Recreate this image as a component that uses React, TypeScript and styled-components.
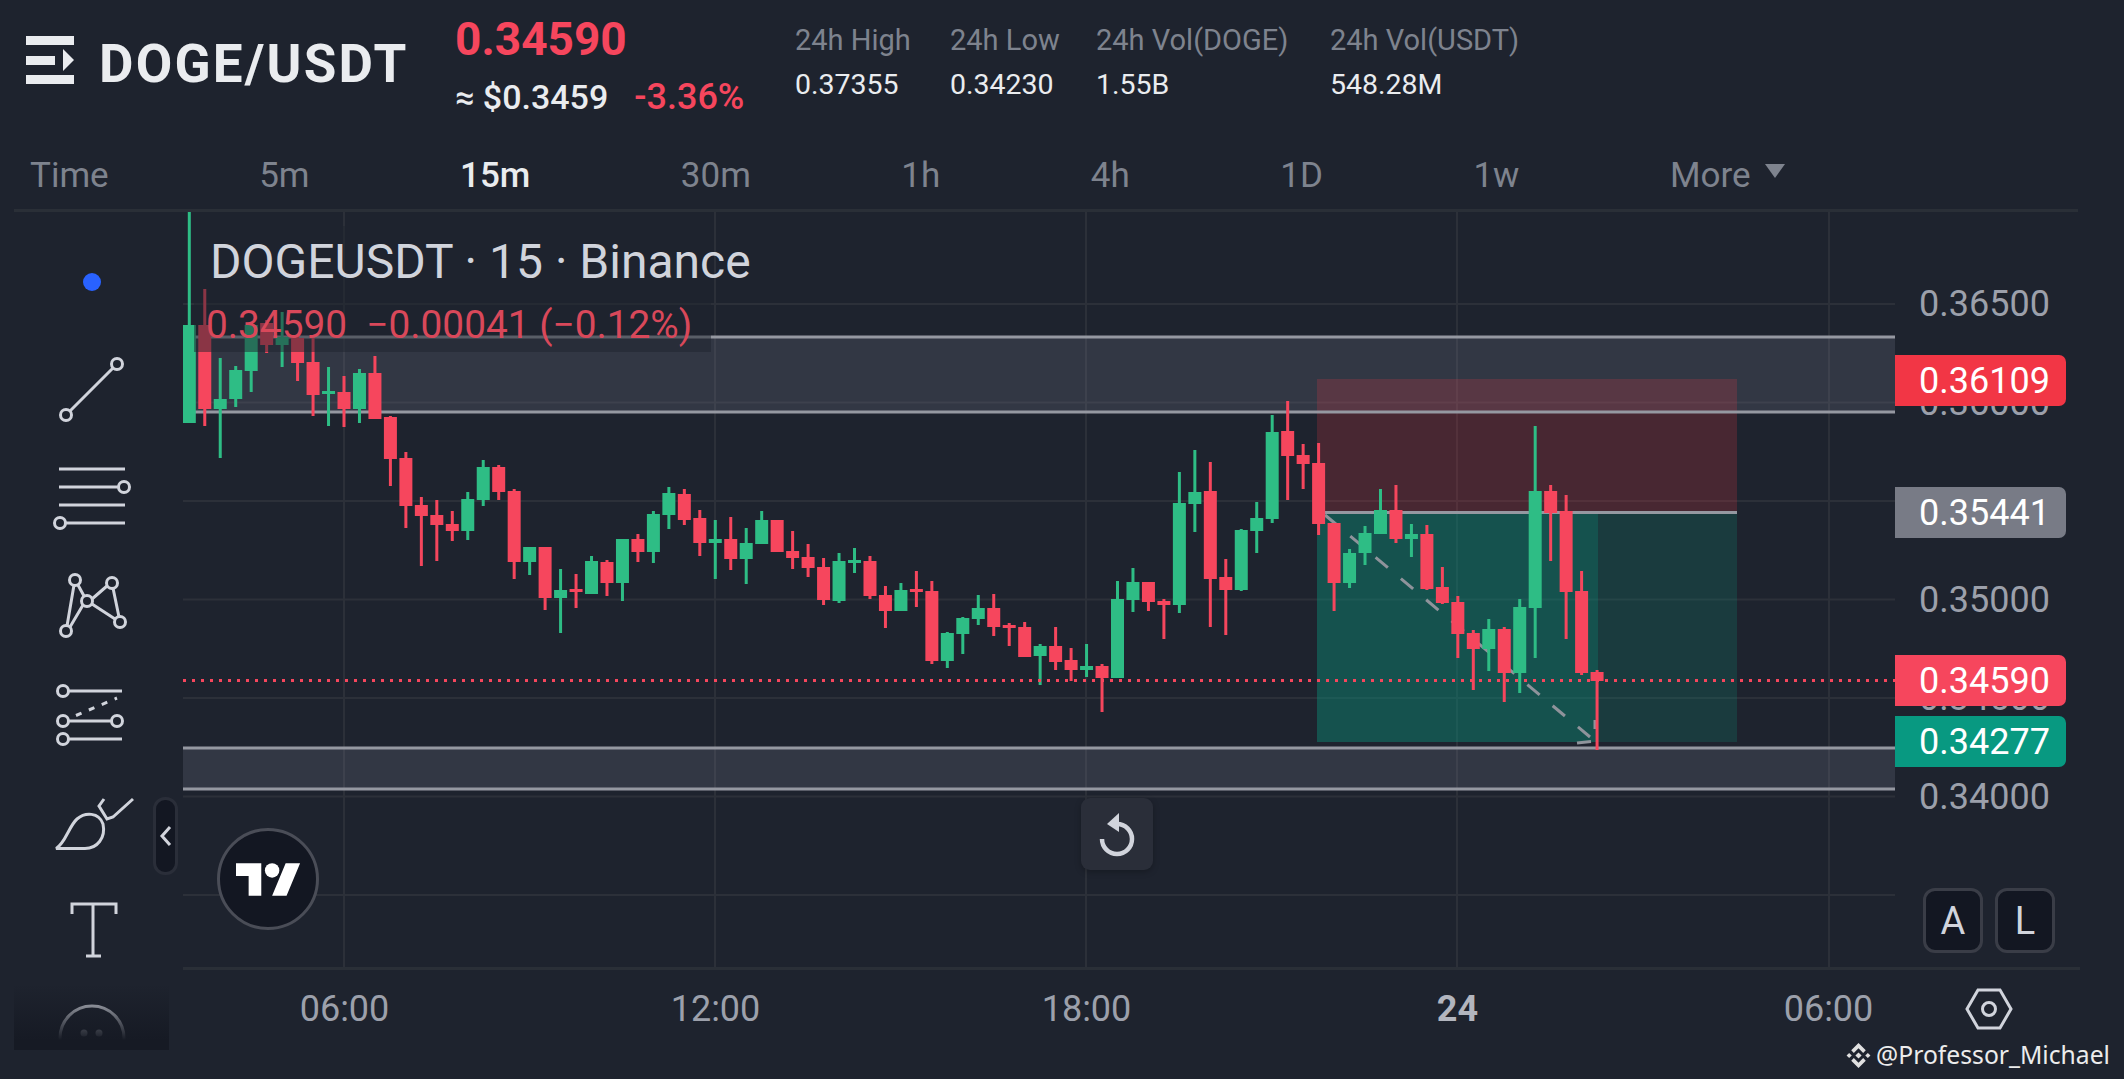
import React from "react";
import styled, { createGlobalStyle } from "styled-components";

const GlobalStyle = createGlobalStyle`
  html, body {
    margin: 0;
    padding: 0;
    background: #1e232e;
  }
  * {
    box-sizing: border-box;
  }
`;

const UP = "#2ebd85";
const DOWN = "#f6465d";
const ICON = "#d1d4dc";

// [g]reen / [r]ed, body top, body bottom, wick top, wick bottom (page y)
const CANDLES: [string, number, number, number, number][] = [
  ["g", 325, 423, 211, 423], ["r", 325, 409, 289, 426], ["g", 399, 409, 358, 458], ["g", 370, 399, 366, 407],
  ["g", 325, 371, 322, 392], ["r", 323, 345, 320, 353], ["g", 337, 345, 312, 367], ["r", 338, 363, 335, 381],
  ["r", 362, 395, 338, 416], ["g", 391, 394, 367, 426], ["r", 392, 409, 376, 427], ["g", 373, 409, 369, 423],
  ["r", 373, 419, 356, 419], ["r", 417, 459, 416, 486], ["r", 458, 506, 452, 528], ["r", 505, 516, 497, 566],
  ["r", 515, 525, 500, 561], ["r", 524, 531, 511, 541], ["g", 499, 531, 492, 540], ["g", 467, 500, 460, 506],
  ["r", 467, 492, 465, 500], ["r", 491, 562, 489, 579], ["g", 547, 562, 547, 575], ["r", 547, 598, 547, 610],
  ["g", 590, 598, 569, 633], ["r", 589, 592, 574, 608], ["g", 561, 594, 556, 594], ["r", 562, 583, 560, 596],
  ["g", 539, 583, 539, 601], ["r", 539, 552, 534, 562], ["g", 514, 552, 511, 563], ["g", 493, 515, 487, 529],
  ["r", 494, 520, 489, 525], ["r", 518, 543, 510, 556], ["g", 539, 543, 520, 579], ["r", 539, 559, 517, 570],
  ["g", 543, 559, 528, 584], ["g", 520, 544, 511, 544], ["r", 520, 552, 520, 552], ["r", 551, 558, 531, 569],
  ["r", 557, 568, 544, 577], ["r", 567, 600, 558, 605], ["g", 561, 601, 553, 603], ["g", 560, 563, 548, 573],
  ["r", 561, 596, 556, 599], ["r", 595, 611, 586, 628], ["g", 590, 611, 583, 611], ["r", 589, 592, 571, 607],
  ["r", 591, 661, 581, 664], ["g", 633, 661, 632, 668], ["g", 618, 634, 617, 654], ["g", 608, 619, 595, 625],
  ["r", 608, 627, 594, 636], ["r", 625, 628, 623, 646], ["r", 627, 657, 622, 657], ["g", 646, 656, 644, 685],
  ["r", 646, 662, 627, 670], ["r", 660, 670, 648, 681], ["g", 666, 670, 644, 677], ["r", 666, 678, 664, 712],
  ["g", 599, 678, 581, 678], ["g", 582, 600, 568, 612], ["r", 582, 602, 582, 611], ["r", 601, 605, 599, 639],
  ["g", 503, 605, 472, 613], ["g", 492, 504, 450, 532], ["r", 491, 579, 462, 627], ["r", 577, 590, 559, 635],
  ["g", 530, 590, 529, 591], ["g", 518, 531, 502, 553], ["g", 432, 519, 415, 523], ["r", 431, 456, 401, 500],
  ["r", 455, 464, 444, 489], ["r", 463, 524, 443, 535], ["r", 523, 583, 523, 611], ["g", 553, 583, 549, 588],
  ["g", 533, 553, 526, 565], ["g", 510, 534, 489, 534], ["r", 510, 539, 485, 543], ["g", 534, 539, 524, 557],
  ["r", 534, 589, 525, 590], ["r", 587, 603, 567, 604], ["r", 602, 634, 596, 658], ["r", 633, 649, 630, 690],
  ["g", 629, 649, 619, 671], ["r", 629, 673, 627, 702], ["g", 607, 673, 599, 693], ["g", 491, 608, 426, 658],
  ["r", 491, 513, 485, 561], ["r", 511, 592, 495, 639], ["r", 591, 673, 571, 675], ["r", 672, 681, 670, 750],
];

const GRID_X = [344, 715, 1086, 1457, 1829];
const GRID_Y = [304, 402.5, 501, 599.5, 698, 796.5, 895];
const TABS = ["Time", "5m", "15m", "30m", "1h", "4h", "1D", "1w"];
const PRICES = ["0.36500", "0.36000", "0.35500", "0.35000", "0.34500", "0.34000"];
const TIMES = ["06:00", "12:00", "18:00", "24", "06:00"];

const Page = styled.div`
  position: relative;
  width: 2124px;
  height: 1079px;
  overflow: hidden;
  background: #1e232e;
  font-family: Roboto, "Liberation Sans", sans-serif;
`;

const Header = styled.header`
  display: flex;
  align-items: flex-start;
  height: 140px;
  padding-left: 26px;
`;

const Symbol = styled.div`
  display: flex;
  align-items: center;
  gap: 25px;
  width: 429px;
  height: 48px;
  margin-top: 36px;
`;

const SymbolName = styled.span`
  padding-top: 8px;
  color: #eaecef;
  font-size: 53px;
  font-weight: 700;
  letter-spacing: 2.2px;
  line-height: 1;
`;

const PriceBlock = styled.div`
  display: flex;
  flex-direction: column;
  width: 340px;
  padding-top: 12px;
`;

const LastPrice = styled.div`
  color: ${DOWN};
  font-size: 46px;
  font-weight: 700;
  line-height: 54px;
`;

const PriceRow = styled.div`
  display: flex;
  gap: 26px;
  margin-top: 6px;
  font-size: 34px;
  font-weight: 500;
  line-height: 50px;
  color: #eaecef;
`;

const Change = styled.span`
  color: ${DOWN};
  font-size: 36px;
`;

const Stats = styled.div`
  display: grid;
  grid-template-columns: 155px 146px 234px auto;
  padding-top: 20px;
`;

const Stat = styled.div`
  display: flex;
  flex-direction: column;
  gap: 5px;
`;

const StatLabel = styled.span`
  color: #7e838e;
  font-size: 29px;
  line-height: 40px;
`;

const StatValue = styled.span`
  color: #eaecef;
  font-size: 28.5px;
  line-height: 40px;
`;

const Tabs = styled.nav`
  display: flex;
  align-items: center;
  gap: 150.5px;
  height: 72px;
  margin: 0 46px 0 14px;
  padding: 3px 0 0 16px;
  border-bottom: 3px solid #2a2f37;
`;

const Tab = styled.span<{ $active?: boolean }>`
  color: ${(p) => (p.$active ? "#eaecef" : "#7e838e")};
  font-size: 35px;
  font-weight: ${(p) => (p.$active ? 500 : 400)};
  line-height: 44px;
`;

const MoreTab = styled(Tab)`
  display: flex;
  align-items: flex-start;
  gap: 14px;
`;

const Caret = styled.i`
  width: 0;
  height: 0;
  margin-top: 10px;
  border-left: 10px solid transparent;
  border-right: 10px solid transparent;
  border-top: 14px solid #7e838e;
`;

const Main = styled.div`
  display: flex;
`;

const Sidebar = styled.aside`
  display: flex;
  flex-direction: column;
  align-items: center;
  flex: 0 0 183px;
  padding-top: 16px;
`;

const ToolCell = styled.div`
  display: flex;
  justify-content: center;
  width: 90px;
  height: 108px;
`;

const BlueDot = styled.span`
  width: 18px;
  height: 18px;
  margin-top: 45px;
  border-radius: 50%;
  background: #2962ff;
`;

const SmileBox = styled.div`
  position: relative;
  display: flex;
  justify-content: center;
  width: 155px;
  height: 66px;
  overflow: hidden;

  &::after {
    content: "";
    position: absolute;
    inset: 0;
    background: linear-gradient(rgba(22, 26, 36, 0), #161a24 85%);
  }
`;

const ChartColumn = styled.div`
  display: flex;
  flex-direction: column;
  flex: 1;
`;

const ChartRow = styled.div`
  display: flex;
  height: 755px;
`;

const Plot = styled.div`
  position: relative;
  flex: 0 0 1712px;
`;

const PlotSvg = styled.svg`
  display: block;
  width: 1712px;
  height: 755px;
`;

const Legend = styled.div`
  position: absolute;
  top: 14px;
  left: 11px;
  width: 517px;
  height: 126px;
  padding-left: 12px;
  background: rgba(30, 35, 46, 0.5);
  white-space: pre;
`;

const LegendTitle = styled.div`
  color: ${ICON};
  font-size: 48px;
  line-height: 72px;
  margin-left: 4px;
`;

const LegendValues = styled.div`
  color: #d9485a;
  font-size: 38.8px;
  line-height: 54px;
`;

const CollapsePill = styled.div`
  position: absolute;
  left: 153px;
  top: 797px;
  display: flex;
  align-items: center;
  justify-content: center;
  width: 25px;
  height: 78px;
  border: 3px solid #2a2e39;
  border-radius: 12px;
  background: #131722;
`;

const LogoBadge = styled.div`
  position: absolute;
  left: 34px;
  top: 616px;
  display: flex;
  align-items: center;
  justify-content: center;
  width: 102px;
  height: 102px;
  border: 3px solid #4a4d57;
  border-radius: 50%;
  background: #131722;
`;

const ResetButton = styled.div`
  position: absolute;
  left: 898px;
  top: 586px;
  width: 72px;
  height: 72px;
  border-radius: 9px;
  background: #2a2e39;
  box-shadow: 0 2px 6px rgba(0, 0, 0, 0.25);
`;

const PriceAxis = styled.div`
  position: relative;
  display: flex;
  flex-direction: column;
  flex: 1;
  padding: 43px 0 14px 24px;
`;

const PriceLabel = styled.div`
  flex: 0 0 98.5px;
  display: flex;
  align-items: center;
  color: #9ca0ab;
  font-size: 36px;
`;

const PriceTag = styled.div<{ $bg: string; $top: number }>`
  position: absolute;
  left: 0;
  top: ${(p) => p.$top}px;
  display: flex;
  align-items: center;
  width: 171px;
  height: 51px;
  padding-left: 24px;
  border-radius: 0 7px 7px 0;
  background: ${(p) => p.$bg};
  color: #fff;
  font-size: 36px;
`;

const ScaleButtons = styled.div`
  display: flex;
  gap: 12px;
  margin-top: auto;
  margin-left: 4px;
`;

const ScaleButton = styled.div`
  display: flex;
  align-items: center;
  justify-content: center;
  width: 60px;
  height: 65px;
  border: 3px solid #3a3d47;
  border-radius: 12px;
  background: #131722;
  color: ${ICON};
  font-size: 38px;
`;

const TimeAxis = styled.div`
  position: relative;
  display: flex;
  height: 80px;
  margin-left: -24px;
`;

const TimeLabel = styled.div<{ $bold?: boolean }>`
  flex: 0 0 371px;
  text-align: center;
  color: ${(p) => (p.$bold ? "#b2b5be" : "#9ca0ab")};
  font-size: 36px;
  font-weight: ${(p) => (p.$bold ? 700 : 400)};
  line-height: 79px;
`;

const BottomRule = styled.div`
  height: 3px;
  margin-right: 44px;
  background: #2a2f37;
`;

const SettingsIcon = styled.svg`
  position: absolute;
  left: 1806px;
  top: 18px;
`;

const Watermark = styled.div`
  position: absolute;
  right: 14px;
  bottom: 6px;
  display: flex;
  align-items: center;
  gap: 4px;
  color: #ececec;
  font-family: "Noto Sans", sans-serif;
  font-size: 24.7px;
  line-height: 36px;
`;

function MenuIcon() {
  return (
    <svg width="48" height="48" viewBox="0 0 48 48" fill="#eaecef">
      <rect width="48" height="9" />
      <rect y="20" width="29" height="9" />
      <path d="M37 13 L48 24 L37 35 Z" />
      <rect y="39" width="48" height="9" />
    </svg>
  );
}

function Tool({ children }: { children: React.ReactNode }) {
  return (
    <ToolCell>
      <svg width="90" height="108" viewBox="0 0 90 108" fill="none" stroke={ICON} strokeWidth="3">
        {children}
      </svg>
    </ToolCell>
  );
}

function Candles() {
  return (
    <>
      {CANDLES.map(([kind, top, bottom, wickTop, wickBottom], i) => {
        const x = 189.3 + i * 15.47;
        const fill = kind === "g" ? UP : DOWN;
        return (
          <g key={i} fill={fill}>
            <rect x={x - 1.5} y={wickTop} width={3} height={wickBottom - wickTop} />
            <rect x={x - 6.5} y={top} width={13} height={bottom - top} />
          </g>
        );
      })}
    </>
  );
}

function ChartDrawing() {
  return (
    <PlotSvg viewBox="183 212 1712 755">
      <g stroke="#2c3039" strokeWidth="2">
        {GRID_X.map((x) => (
          <line key={x} x1={x} x2={x} y1={212} y2={967} />
        ))}
        {GRID_Y.map((y) => (
          <line key={y} x1={183} x2={1895} y1={y} y2={y} />
        ))}
      </g>
      <rect x="183" y="337" width="1712" height="75" fill="rgba(131,137,160,0.2)" />
      <rect x="183" y="748" width="1712" height="41" fill="rgba(131,137,160,0.2)" />
      <rect x="1317" y="379" width="420" height="133" fill="rgba(242,54,69,0.2)" />
      <rect x="1317" y="512" width="420" height="230" fill="rgba(8,153,129,0.2)" />
      <rect x="1317" y="512" width="281" height="230" fill="rgba(8,153,129,0.25)" />
      <g stroke="#9598a1" strokeWidth="3">
        <line x1="183" x2="1895" y1="337" y2="337" />
        <line x1="183" x2="1895" y1="412" y2="412" />
        <line x1="183" x2="1895" y1="748" y2="748" />
        <line x1="183" x2="1895" y1="789" y2="789" />
        <line x1="1317" x2="1737" y1="512.5" y2="512.5" />
      </g>
      <g stroke="#8f939b" strokeWidth="3" fill="none">
        <line x1="1325" y1="515" x2="1590" y2="737" strokeDasharray="16 17" />
        <line x1="1595" y1="720" x2="1595" y2="729" />
        <line x1="1577" y1="743" x2="1591" y2="741.5" />
      </g>
      <Candles />
      <line x1="183" x2="1895" y1="680.5" y2="680.5" stroke={DOWN} strokeWidth="3" strokeDasharray="3 6" />
    </PlotSvg>
  );
}

export default function App() {
  return (
    <Page>
      <GlobalStyle />
      <Header>
        <Symbol>
          <MenuIcon />
          <SymbolName>DOGE/USDT</SymbolName>
        </Symbol>
        <PriceBlock>
          <LastPrice>0.34590</LastPrice>
          <PriceRow>
            <span>≈ $0.3459</span>
            <Change>-3.36%</Change>
          </PriceRow>
        </PriceBlock>
        <Stats>
          <Stat>
            <StatLabel>24h High</StatLabel>
            <StatValue>0.37355</StatValue>
          </Stat>
          <Stat>
            <StatLabel>24h Low</StatLabel>
            <StatValue>0.34230</StatValue>
          </Stat>
          <Stat>
            <StatLabel>24h Vol(DOGE)</StatLabel>
            <StatValue>1.55B</StatValue>
          </Stat>
          <Stat>
            <StatLabel>24h Vol(USDT)</StatLabel>
            <StatValue>548.28M</StatValue>
          </Stat>
        </Stats>
      </Header>

      <Tabs>
        {TABS.map((t) => (
          <Tab key={t} $active={t === "15m"}>
            {t}
          </Tab>
        ))}
        <MoreTab>
          More
          <Caret />
        </MoreTab>
      </Tabs>

      <Main>
        <Sidebar>
          <ToolCell>
            <BlueDot />
          </ToolCell>
          <Tool>
            <circle cx="19" cy="79" r="5.5" />
            <circle cx="70" cy="28" r="5.5" />
            <line x1="23" y1="75" x2="66" y2="32" />
          </Tool>
          <Tool>
            <line x1="12" y1="25" x2="78" y2="25" />
            <line x1="12" y1="43" x2="71" y2="43" />
            <circle cx="77" cy="43" r="5.5" />
            <line x1="12" y1="61" x2="78" y2="61" />
            <circle cx="13" cy="79" r="5.5" />
            <line x1="19" y1="79" x2="78" y2="79" />
          </Tool>
          <Tool>
            <circle cx="28" cy="28" r="5.5" />
            <circle cx="65" cy="31" r="5.5" />
            <circle cx="40" cy="49" r="5.5" />
            <circle cx="19" cy="79" r="5.5" />
            <circle cx="73" cy="70" r="5.5" />
            <path d="M27 33 L20 74 M31 33 L37 44 M36 53 L23 75 M45 47 L60 34 M45 52 L68 67 M66 36 L72 65" />
          </Tool>
          <Tool>
            <circle cx="16" cy="31" r="5.5" />
            <line x1="22" y1="31" x2="75" y2="31" />
            <line x1="29" y1="55.5" x2="70" y2="38" strokeDasharray="6 8" />
            <circle cx="16" cy="61" r="5.5" />
            <circle cx="70" cy="61" r="5.5" />
            <line x1="22" y1="61" x2="64" y2="61" />
            <circle cx="16" cy="79" r="5.5" />
            <line x1="22" y1="79" x2="75" y2="79" />
          </Tool>
          <Tool>
            <path d="M57 31 L52 38 L60 51 L66 49 L86 31" />
            <path d="M9 80.5 C18 76 22 58 30 51 C38 44 52 44 56 56 C59 70 50 80.5 38 80.5 Z" />
          </Tool>
          <Tool>
            <path d="M25 38 V28 H69 V38 M46 28 V80 M39 80 H54" />
          </Tool>
          <SmileBox>
            <svg width="90" height="108" viewBox="0 0 90 108" fill="none" stroke={ICON} strokeWidth="3">
              <circle cx="45" cy="54" r="32" />
              <circle cx="37" cy="49" r="2" fill={ICON} />
              <circle cx="52" cy="49" r="2" fill={ICON} />
            </svg>
          </SmileBox>
        </Sidebar>

        <ChartColumn>
          <ChartRow>
            <Plot>
              <ChartDrawing />
              <Legend>
                <LegendTitle>DOGEUSDT · 15 · Binance</LegendTitle>
                <LegendValues>0.34590  −0.00041 (−0.12%)</LegendValues>
              </Legend>
              <LogoBadge>
                <svg width="65" height="33" viewBox="0 4 36 18" fill="#fff">
                  <path d="M14 22H7V11H0V4h14v18zM28 22h-8l7.5-18h8L28 22z" />
                  <circle cx="20" cy="8" r="4" />
                </svg>
              </LogoBadge>
              <ResetButton>
                <svg width="72" height="72" viewBox="0 0 72 72" fill="none" stroke={ICON} strokeWidth="4.5">
                  <path d="M36 26 A15 15 0 1 1 21 41" />
                  <path d="M38 15 L26 26 L38 34 Z" fill={ICON} stroke="none" />
                </svg>
              </ResetButton>
            </Plot>
            <PriceAxis>
              {PRICES.map((p) => (
                <PriceLabel key={p}>{p}</PriceLabel>
              ))}
              <PriceTag $bg="#f23645" $top={143}>0.36109</PriceTag>
              <PriceTag $bg="#787b86" $top={275}>0.35441</PriceTag>
              <PriceTag $bg="#f6465d" $top={443}>0.34590</PriceTag>
              <PriceTag $bg="#089981" $top={504}>0.34277</PriceTag>
              <ScaleButtons>
                <ScaleButton>A</ScaleButton>
                <ScaleButton>L</ScaleButton>
              </ScaleButtons>
            </PriceAxis>
          </ChartRow>
          <BottomRule />
          <TimeAxis>
            {TIMES.map((t, i) => (
              <TimeLabel key={i} $bold={t === "24"}>
                {t}
              </TimeLabel>
            ))}
            <SettingsIcon width="48" height="42" viewBox="0 0 48 42" fill="none" stroke={ICON} strokeWidth="3">
              <path d="M2 21 L13 2 H35 L46 21 L35 40 H13 Z" />
              <circle cx="24" cy="21" r="6.5" />
            </SettingsIcon>
          </TimeAxis>
        </ChartColumn>
      </Main>

      <CollapsePill>
        <svg width="14" height="22" viewBox="0 0 14 22" fill="none" stroke={ICON} strokeWidth="3">
          <path d="M11 2 L3 11 L11 20" />
        </svg>
      </CollapsePill>

      <Watermark>
        <svg width="27" height="27" viewBox="0 0 26 26" fill="#e0e0e0">
          <path d="M13 1 L20 8 L17.5 10.5 L13 6 L8.5 10.5 L6 8 Z" />
          <path d="M13 25 L20 18 L17.5 15.5 L13 20 L8.5 15.5 L6 18 Z" />
          <path d="M13 10 L16 13 L13 16 L10 13 Z" />
          <path d="M4 10.5 L6.5 13 L4 15.5 L1.5 13 Z" />
          <path d="M22 10.5 L24.5 13 L22 15.5 L19.5 13 Z" />
        </svg>
        @Professor_Michael
      </Watermark>
    </Page>
  );
}
